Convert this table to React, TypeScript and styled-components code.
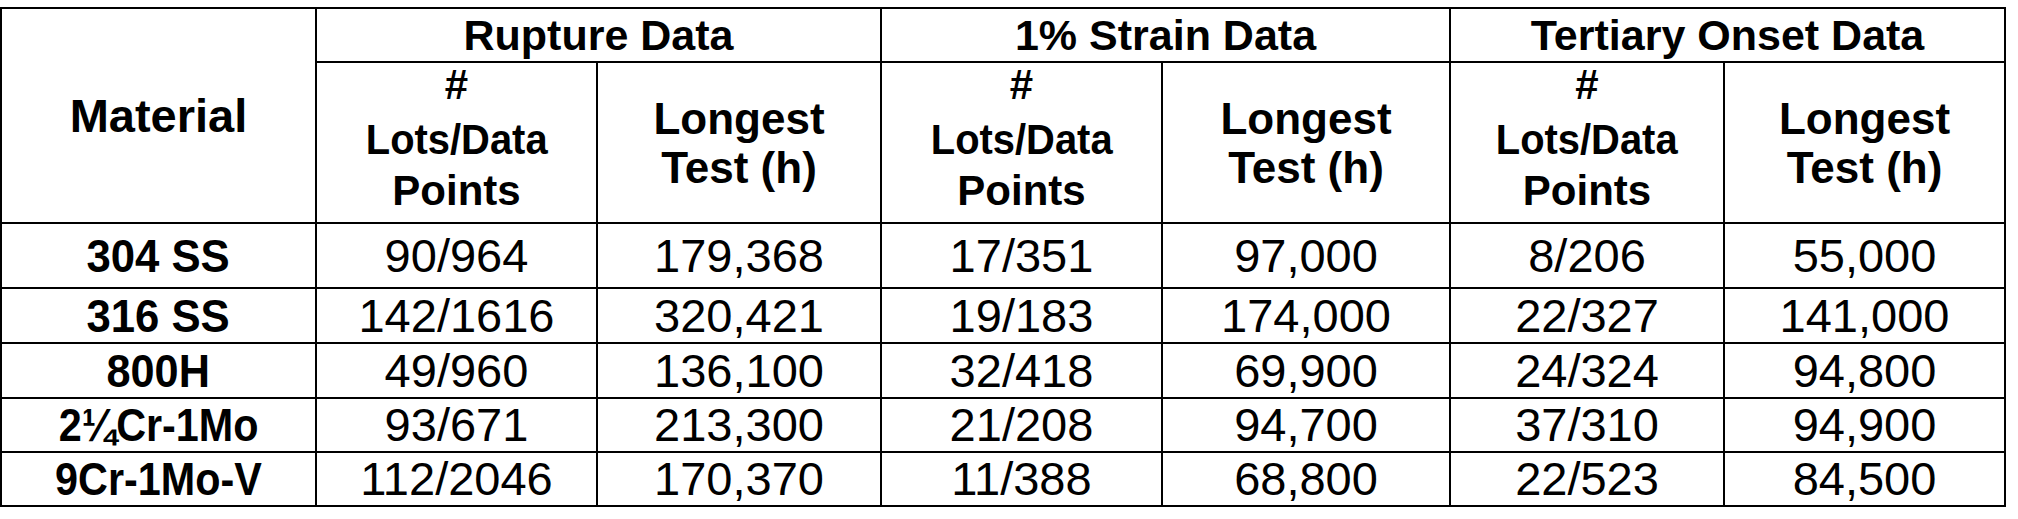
import React from "react";
import styled, { createGlobalStyle } from "styled-components";

const GlobalStyle = createGlobalStyle`
  html, body {
    margin: 0;
    padding: 0;
    background: #ffffff;
  }
  body {
    font-family: "Liberation Sans", Arial, sans-serif;
    color: #000000;
  }
`;

const Page = styled.div`
  padding-top: 7px;
  width: 2018px;
  height: 519px;
  box-sizing: border-box;
  background: #ffffff;
`;

const Table = styled.table`
  border-collapse: collapse;
  table-layout: fixed;
  width: 2006px;
  font-family: "Liberation Sans", Arial, sans-serif;
  color: #000;
`;

const HeadRow = styled.tr<{ $h: number }>`
  height: ${(p) => p.$h}px;
`;

const HeadCell = styled.th<{ $size?: number; $lh?: number }>`
  border: 2px solid #000;
  padding: 0;
  text-align: center;
  vertical-align: middle;
  font-weight: 700;
  font-size: ${(p) => p.$size ?? 42}px;
  line-height: ${(p) => p.$lh ?? 50}px;
`;

const HashLine = styled.div`
  line-height: 46px;
  margin-top: -8px;
  margin-bottom: 6px;
`;

const BodyRow = styled.tr<{ $h: number }>`
  height: ${(p) => p.$h}px;
`;

const BodyCell = styled.td<{ $bold?: boolean }>`
  border: 2px solid #000;
  padding: 0;
  text-align: center;
  vertical-align: middle;
  font-size: 47px;
  line-height: 50px;
  font-weight: ${(p) => (p.$bold ? 700 : 400)};
  white-space: nowrap;
`;

const Narrow = styled.span<{ $sx: number }>`
  display: inline-block;
  transform: scaleX(${(p) => p.$sx});
  transform-origin: center;
`;

const colWidths = [315, 281, 284, 281, 288, 274, 281];

type Row = { name: string; values: string[]; h: number; sx: number };

const rows: Row[] = [
  { name: "304 SS", values: ["90/964", "179,368", "17/351", "97,000", "8/206", "55,000"], h: 65, sx: 0.93 },
  { name: "316 SS", values: ["142/1616", "320,421", "19/183", "174,000", "22/327", "141,000"], h: 55, sx: 0.93 },
  { name: "800H", values: ["49/960", "136,100", "32/418", "69,900", "24/324", "94,800"], h: 55, sx: 0.92 },
  { name: "2\u00BCCr-1Mo", values: ["93/671", "213,300", "21/208", "94,700", "37/310", "94,900"], h: 54, sx: 0.88 },
  { name: "9Cr-1Mo-V", values: ["112/2046", "170,370", "11/388", "68,800", "22/523", "84,500"], h: 54, sx: 0.88 },
];

const groups = ["Rupture Data", "1% Strain Data", "Tertiary Onset Data"];

export default function App() {
  return (
    <Page>
      <GlobalStyle />
      <Table>
        <colgroup>
          {colWidths.map((w, i) => (
            <col key={i} style={{ width: w }} />
          ))}
        </colgroup>
        <thead>
          <HeadRow $h={54}>
            <HeadCell rowSpan={2} $size={47}>
              Material
            </HeadCell>
            {groups.map((g) => (
              <HeadCell key={g} colSpan={2} $size={43}>
                {g}
              </HeadCell>
            ))}
          </HeadRow>
          <HeadRow $h={161}>
            {groups.map((g) => (
              <React.Fragment key={g}>
                <HeadCell $size={42} $lh={51}>
                  <HashLine>#</HashLine>
                  <Narrow $sx={0.95}>Lots/Data</Narrow>
                  <br />
                  Points
                </HeadCell>
                <HeadCell $size={44} $lh={49}>
                  Longest
                  <br />
                  Test (h)
                </HeadCell>
              </React.Fragment>
            ))}
          </HeadRow>
        </thead>
        <tbody>
          {rows.map((r) => (
            <BodyRow key={r.name} $h={r.h}>
              <BodyCell $bold>
                <Narrow $sx={r.sx}>{r.name}</Narrow>
              </BodyCell>
              {r.values.map((v, i) => (
                <BodyCell key={i}>{v}</BodyCell>
              ))}
            </BodyRow>
          ))}
        </tbody>
      </Table>
    </Page>
  );
}
